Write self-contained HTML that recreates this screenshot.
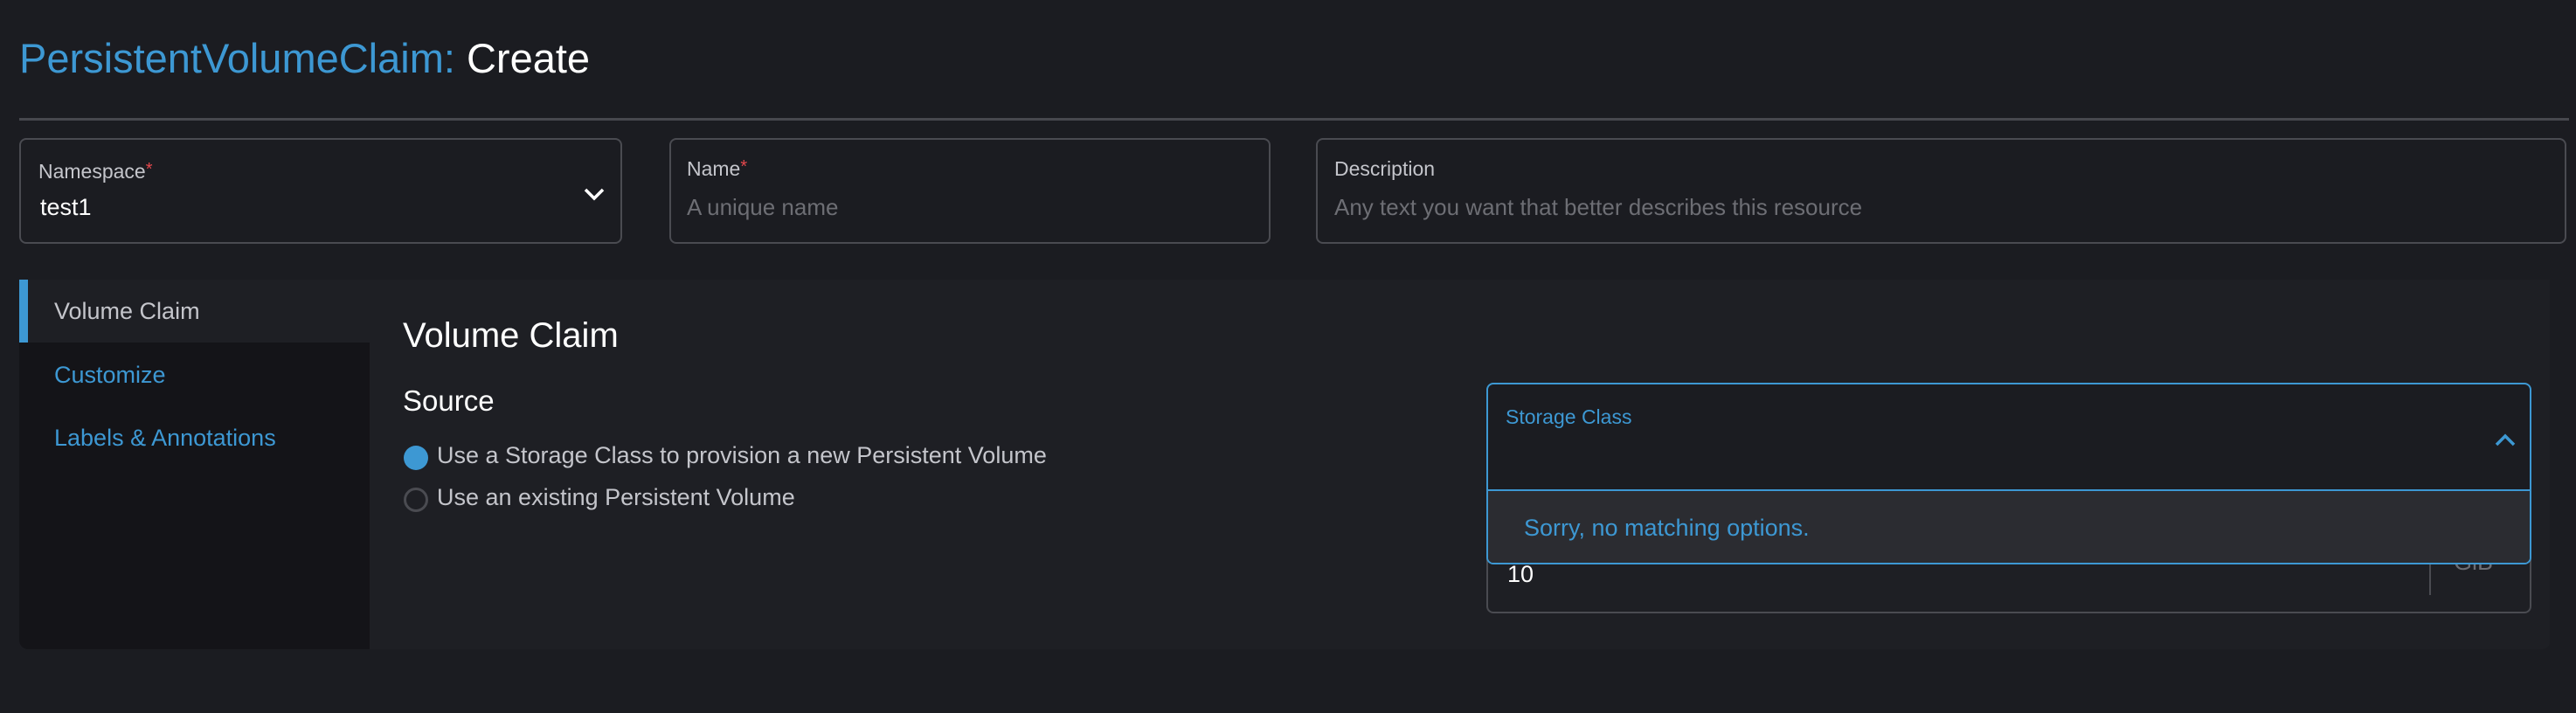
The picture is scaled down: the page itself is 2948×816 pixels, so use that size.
<!DOCTYPE html>
<html><head><meta charset="utf-8"><style>
*{margin:0;padding:0;box-sizing:border-box}
body{width:2948px;height:816px;background:#1b1c21;font-family:"Liberation Sans",sans-serif;position:relative;overflow:hidden}
.a{position:absolute;white-space:nowrap}
.box{position:absolute;border:2px solid #4a4b51;border-radius:8px}
.lbl{color:#c4c5cb;font-size:23px}
.req{color:#e5484d;font-size:20px;vertical-align:top}
</style></head><body>
<div class="a" style="left:22px;top:39px;font-size:47px;color:#3d98d3">PersistentVolumeClaim: <span style="color:#fff">Create</span></div>
<div class="a" style="left:22px;top:135px;width:2918px;height:3px;background:#47484e"></div>

<div class="box" style="left:22px;top:158px;width:690px;height:121px"></div>
<div class="a lbl" style="left:44px;top:183px">Namespace<span class="req">*</span></div>
<div class="a" style="left:46px;top:222px;font-size:27px;color:#fff">test1</div>
<svg class="a" style="left:666px;top:212px" width="28" height="20" viewBox="0 0 28 20"><path d="M4 5l10 10 10-10" fill="none" stroke="#fff" stroke-width="3.5"/></svg>

<div class="box" style="left:766px;top:158px;width:688px;height:121px"></div>
<div class="a lbl" style="left:786px;top:180px">Name<span class="req">*</span></div>
<div class="a" style="left:786px;top:222px;font-size:26px;color:#6d6e74">A unique name</div>

<div class="box" style="left:1506px;top:158px;width:1431px;height:121px"></div>
<div class="a lbl" style="left:1527px;top:180px">Description</div>
<div class="a" style="left:1527px;top:222px;font-size:26px;color:#6d6e74">Any text you want that better describes this resource</div>

<div class="a" style="left:22px;top:320px;width:2896px;height:423px;background:#1e1f24;border-radius:0 0 8px 8px"></div>
<div class="a" style="left:22px;top:392px;width:401px;height:351px;background:#141418;border-radius:0 0 0 10px"></div>
<div class="a" style="left:22px;top:320px;width:10px;height:72px;background:#3d98d3"></div>
<div class="a" style="left:62px;top:341px;font-size:27px;color:#c4c5cb">Volume Claim</div>
<div class="a" style="left:62px;top:414px;font-size:27px;color:#3d98d3">Customize</div>
<div class="a" style="left:62px;top:486px;font-size:27px;color:#3d98d3">Labels &amp; Annotations</div>

<div class="a" style="left:461px;top:362px;font-size:40px;color:#fff">Volume Claim</div>
<div class="a" style="left:461px;top:440px;font-size:33px;color:#fff">Source</div>
<div class="a" style="left:462px;top:510px;width:28px;height:28px;border-radius:50%;background:#3d98d3"></div>
<div class="a" style="left:500px;top:506px;font-size:27px;color:#c4c5cb">Use a Storage Class to provision a new Persistent Volume</div>
<div class="a" style="left:462px;top:558px;width:28px;height:28px;border-radius:50%;border:3px solid #4a4b51"></div>
<div class="a" style="left:500px;top:554px;font-size:27px;color:#c4c5cb">Use an existing Persistent Volume</div>

<div class="box" style="left:1701px;top:560px;width:1196px;height:142px"></div>
<div class="a" style="left:2780px;top:646px;width:2px;height:35px;background:#4a4b51"></div>
<div class="a" style="left:2808px;top:628px;font-size:27px;color:#6d6e74">GiB</div>
<div class="a" style="left:1725px;top:642px;font-size:27px;color:#fff">10</div>
<div class="a" style="left:1701px;top:438px;width:1196px;height:208px;border:2px solid #3d98d3;border-radius:8px;background:#1b1c21"></div>
<div class="a" style="left:1703px;top:560px;width:1192px;height:84px;background:#2b2c31;border-top:2px solid #3d98d3;border-radius:0 0 6px 6px"></div>
<div class="a" style="left:1723px;top:464px;font-size:23px;color:#3d98d3">Storage Class</div>
<svg class="a" style="left:2853px;top:494px" width="28" height="20" viewBox="0 0 28 20"><path d="M4 15l10-10 10 10" fill="none" stroke="#3d98d3" stroke-width="3.5"/></svg>
<div class="a" style="left:1744px;top:589px;font-size:27px;color:#3d98d3">Sorry, no matching options.</div>
</body></html>
